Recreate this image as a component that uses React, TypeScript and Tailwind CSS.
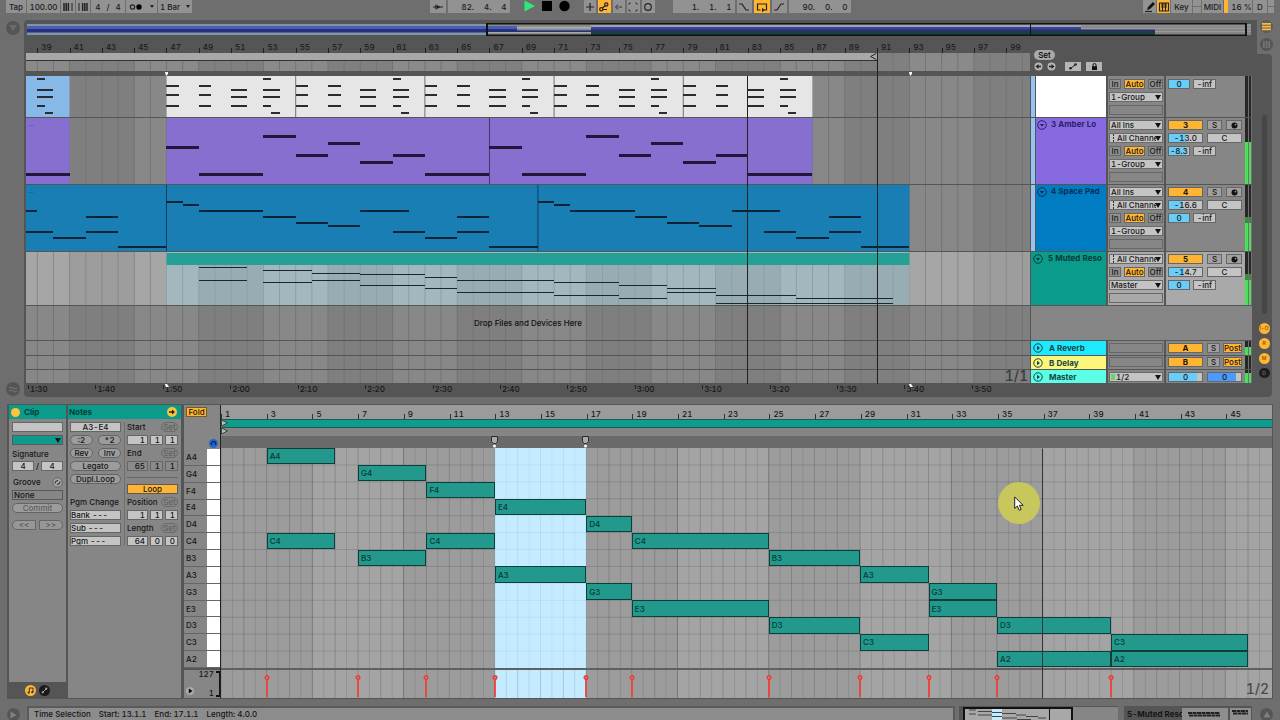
import React from "react";

/* ---------- data ---------- */

const ARR_START = 38.3;
const ARR_BARS = 62.17;
const ROLL_BARS = 46.05;

type Rect = [start: number, length: number, y: number];
type Clip = { start: number; length: number; color: string };

const DRUM_PATTERN: Rect[] = [
  [0, 0.78, 9], [0, 0.78, 18], [0, 0.78, 29],
  [2, 0.78, 9], [2, 0.78, 18], [2, 0.78, 29],
  [4, 1, 13], [4, 1, 20], [4, 1, 29],
  [6, 0.5, 2], [6, 1, 13], [6, 1, 20], [6, 0.5, 29], [6.5, 0.5, 36],
];
const AMBER_PATTERN: Rect[] = [
  [0, 2, 28], [2, 4, 55], [6, 2, 17], [8, 2, 36], [10, 2, 24], [12, 2, 43], [14, 2, 36], [16, 4, 55],
];
const SPACE_PATTERN: Rect[] = [
  [0, 1, 16], [1, 1, 19], [2, 4, 25], [6, 2, 31], [8, 2, 37], [10, 2, 40], [12, 3, 25],
  [14, 2, 46], [16, 2, 52], [18, 2, 31], [18, 2, 46], [20, 3, 61],
];

const repeat = (pattern: Rect[], starts: number[]): Rect[] =>
  starts.flatMap((s) => pattern.map(([a, l, y]): Rect => [a + s, l, y]));

const ROWS = ["A4", "G4", "F4", "E4", "D4", "C4", "B3", "A3", "G3", "E3", "D3", "C3", "A2"];
const SEMITONES: Record<string, number> = {
  A4: 0, G4: 2, F4: 4, E4: 5, D4: 7, C4: 9, B3: 10, A3: 12, G3: 14, E3: 17, D3: 19, C3: 21, A2: 24,
};
const NOTES: [name: string, start: number, end: number][] = [
  ["A4", 3, 6], ["C4", 3, 6], ["G4", 7, 10], ["B3", 7, 10], ["F4", 10, 13], ["C4", 10, 13],
  ["E4", 13, 17], ["A3", 13, 17], ["D4", 17, 19], ["G3", 17, 19], ["C4", 19, 25], ["E3", 19, 25],
  ["B3", 25, 29], ["D3", 25, 29], ["A3", 29, 32], ["C3", 29, 32], ["G3", 32, 35], ["E3", 32, 35],
  ["D3", 35, 40], ["A2", 35, 40], ["C3", 40, 46], ["A2", 40, 46],
];
const VELOCITIES = [3, 7, 10, 13, 17, 19, 25, 29, 32, 35, 40];

const arrPct = (bar: number) => `${((bar - ARR_START) / ARR_BARS) * 100}%`;
const rollPct = (bar: number) => `${((bar - 1) / ROLL_BARS) * 100}%`;
const range = (n: number) => Array.from({ length: n }, (_, i) => i);

/* ---------- small controls ---------- */

function Arrow({ className = "" }: { className?: string }) {
  return (
    <svg viewBox="0 0 6 5" className={`h-[5px] w-1.5 ${className}`} aria-hidden="true">
      <path d="M0 0h6L3 5z" fill="#111" />
    </svg>
  );
}

function Drop({ label, value, prefix, className = "" }: { label: string; value: string; prefix?: React.ReactNode; className?: string }) {
  return (
    <label className={`relative flex h-[10px] items-center border border-[#6a6a6a] bg-[#c4c4c4] ${className}`}>
      {prefix}
      <select aria-label={label} className="h-2 w-full min-w-0 appearance-none overflow-hidden bg-transparent pr-1.5 pl-px text-[8px] leading-[8px] outline-none">
        <option>{value}</option>
      </select>
      <Arrow className="pointer-events-none absolute right-px top-[2px]" />
    </label>
  );
}

function Box({ children, className = "", label }: { children?: React.ReactNode; className?: string; label?: string }) {
  return (
    <button aria-label={label} className={`flex h-[10px] items-center justify-center overflow-hidden whitespace-nowrap border border-[#666] leading-[8px] ${className}`}>
      {children}
    </button>
  );
}

function Num({ label, value, className = "" }: { label: string; value: string; className?: string }) {
  return (
    <input aria-label={label} defaultValue={value} className={`h-[10px] min-w-0 border border-[#666] p-0 text-[8px] leading-[8px] outline-none ${className}`} />
  );
}

function Pill({ children, className = "" }: { children: React.ReactNode; className?: string }) {
  return (
    <button className={`flex h-[10px] items-center justify-center rounded-full border border-[#646464] bg-[#9c9c9c] leading-[8px] ${className}`}>
      {children}
    </button>
  );
}

/* ---------- transport ---------- */

function T({ children, className = "", label, bg = "bg-[#929292]" }: { children?: React.ReactNode; className?: string; label?: string; bg?: string }) {
  return (
    <button aria-label={label} className={`flex h-[13px] shrink-0 items-center justify-center whitespace-nowrap ${bg} ${className}`}>
      {children}
    </button>
  );
}

function Ico({ children, w = 12 }: { children: React.ReactNode; w?: number }) {
  return (
    <svg width={w} height="12" viewBox={`0 0 ${w} 12`} fill="none" stroke="#222" strokeWidth="1.2" aria-hidden="true">
      {children}
    </svg>
  );
}

function Transport() {
  return (
    <header className="flex h-5 shrink-0 items-start pr-[6px] pl-[6px] text-[8px] text-[#1c1c1c]">
      <div className="flex flex-1 gap-px">
        <T className="w-5">Tap</T>
        <T className="w-[33px]">100.00</T>
        <T className="w-[14px]" label="Nudge down"><Ico w={10}><path d="M1 2v8M3.2 2v8M5.400 2v8" strokeWidth="1.500" /><path d="M9 2v8" strokeWidth="1" /></Ico></T>
        <T className="w-[14px]" label="Nudge up"><Ico w={10}><path d="M4.600 2v8M6.800 2v8M9 2v8" strokeWidth="1.500" /><path d="M1 2v8" strokeWidth="1" /></Ico></T>
        <T className="w-[34px] gap-1.5"><span>4</span><span>/</span><span>4</span></T>
        <T className="w-[31px] gap-2" label="Metronome">
          <Ico w={13}><circle cx="3.500" cy="6" r="2.200" /><circle cx="10" cy="6" r="2.700" fill="#000" stroke="none" /></Ico>
          <svg width="4" height="3" viewBox="0 0 4 3" aria-hidden="true"><path d="M0 0h4L2 3z" fill="#222" /></svg>
        </T>
        <T className="w-[34px] gap-1.5">
          1 Bar
          <svg width="4" height="3" viewBox="0 0 4 3" aria-hidden="true"><path d="M0 0h4L2 3z" fill="#222" /></svg>
        </T>
      </div>
      <div className="flex items-start">
        <div className="flex gap-0.5">
          <T className="w-4" label="Follow"><Ico w={12}><path d="M1 6h10M4 3.500v5" /><path d="M5 4L8.500 6 5 8z" fill="#222" stroke="none" /></Ico></T>
          <T className="w-[62px] justify-end gap-2.5 pr-[3px]"><span>82.</span><span>4.</span><span>4</span></T>
        </div>
        <div className="mx-[14px] flex gap-[7px]">
          <button aria-label="Play"><Ico w={11}><path d="M0.500 0.500L11 6 0.500 11.500z" fill="#2fe87a" stroke="none" /></Ico></button>
          <button aria-label="Stop"><Ico w={10}><path d="M0 1h10v10H0z" fill="#000" stroke="none" /></Ico></button>
          <button aria-label="Record"><Ico w={11}><circle cx="5.500" cy="6" r="5.200" fill="#000" stroke="none" /></Ico></button>
        </div>
        <div className="flex gap-[2px]">
          <T className="w-3" label="Overdub"><Ico><path d="M6 2v8M2 6h8" /></Ico></T>
          <T className="w-[13px]" label="Automation arm" bg="bg-[#ffb532]"><Ico><circle cx="3.300" cy="8.300" r="1.600" /><circle cx="8.300" cy="3.500" r="1.600" /><path d="M4.500 7L7.200 4.700M5 8.500h4" /></Ico></T>
          <T className="w-[12px]" label="Re-enable automation"><Ico><path d="M2 6h7M5 3.500L2.500 6 5 8.500M8 5v2" stroke="#555" /></Ico></T>
          <T className="w-[13px]" label="Capture"><Ico><path d="M2 4V2h2M8 2h2v2M10 8v2H8M4 10H2V8" stroke="#444" strokeWidth="1" /></Ico></T>
          <T className="w-[13px]" label="Session record"><Ico><circle cx="6" cy="6" r="3.300" /></Ico></T>
        </div>
        <div className="ml-[18px] flex gap-[2px]">
          <T className="w-[62px] justify-end gap-2.5 pr-[3px]"><span>1.</span><span>1.</span><span>1</span></T>
          <T className="w-[15px]" label="Punch in"><Ico><path d="M1 3h3l4 6h3" /></Ico></T>
          <T className="w-[16px]" label="Loop" bg="bg-[#ffb532]"><Ico><path d="M4.500 9H1.500V3h9v6H7" /><path d="M6 6.800v4.400L8.500 9z" fill="#222" stroke="none" /></Ico></T>
          <T className="w-[15px]" label="Punch out"><Ico><path d="M1 9h3l4-6h3" /></Ico></T>
          <T className="w-[62px] justify-end gap-2.5 pr-[3px]"><span>90.</span><span>0.</span><span>0</span></T>
        </div>
      </div>
      <div className="flex flex-1 justify-end gap-px">
        <T className="w-[13px]" label="Draw mode"><Ico><path d="M3 9l1-3 5-5 2 2-5 5z" fill="#111" stroke="none" /><path d="M1 10.500h7" /></Ico></T>
        <T className="w-[13px]" label="Computer keyboard" bg="bg-[#ffb532]"><Ico><path d="M1.500 2h9v8h-9zM4.500 7v3M7.500 7v3" /><path d="M3.500 2h2v5h-2zM6.500 2h2v5h-2z" fill="#222" stroke="none" /></Ico></T>
        <T className="w-[21px]">Key</T>
        <span className="flex w-[8px] flex-col gap-px"><i className="h-1.5 bg-[#929292]" /><i className="h-1.5 bg-[#929292]" /></span>
        <T className="w-[21px]">MIDI</T>
        <T className="w-[28px] gap-[3px]"><i className="h-[13px] w-1 bg-[#ffb532]" />16 %</T>
        <T className="w-[14px]">D</T>
        <span className="flex w-[6px] flex-col gap-px"><i className="h-1.5 bg-[#929292]" /><i className="h-1.5 bg-[#929292]" /></span>
      </div>
    </header>
  );
}

/* ---------- arrangement ---------- */

function LaneGrid({ light, dark, line }: { light: string; dark: string; line: string }) {
  return (
    <>
      {range(16).map((i) => (
        <rect key={i} x={37 + i * 4} y="0" width="4" height="100%" fill={i % 2 === 0 ? light : dark} />
      ))}
      {range(63).map((i) => (
        <path key={i} d={`M${38 + i} 0v100`} stroke={line} strokeWidth="1" vectorEffect="non-scaling-stroke" />
      ))}
    </>
  );
}

function Lane({ height, selected, clips = [], notes = [], noteH = 2, noteColor = "#161c2c", dividers = [], children }: {
  height: number; selected?: boolean; clips?: Clip[]; notes?: Rect[]; noteH?: number; noteColor?: string; dividers?: number[]; children?: React.ReactNode;
}) {
  return (
    <svg className="block h-full w-full" viewBox={`${ARR_START} 0 ${ARR_BARS} ${height}`} preserveAspectRatio="none" aria-hidden="true">
      {selected
        ? <LaneGrid light="#a6a6a6" dark="#9d9d9d" line="#888" />
        : <LaneGrid light="#888888" dark="#7f7f7f" line="#747474" />}
      {clips.map((c) => <rect key={c.start} x={c.start} y="0" width={c.length} height={height} fill={c.color} />)}
      {dividers.map((d) => <path key={d} d={`M${d} 0v${height}`} stroke="#000" strokeOpacity="0.5" strokeWidth="1" vectorEffect="non-scaling-stroke" />)}
      {children}
      {notes.map(([s, l, y], i) => (
        <rect key={i} x={s} y={y} width={l} height={noteH} fill={noteColor} shapeRendering="crispEdges" />
      ))}
    </svg>
  );
}

function Meter({ level, hot }: { level: number; hot?: boolean }) {
  return (
    <div className="flex w-[7px] shrink-0 gap-px bg-[#707070] pr-px">
      {[0, 1].map((i) => (
        <div key={i} className="flex flex-1 flex-col justify-end bg-[#262626]">
          {hot && <i className="h-1.5 bg-[#3c8a3c]" />}
          <i className="bg-[#4be05a]" style={{ height: `${level}%` }} />
        </div>
      ))}
    </div>
  );
}

function InAutoOff() {
  return (
    <div className="flex justify-between">
      <Box className="w-3 bg-[#8f8f8f]">In</Box>
      <Box className="w-[21px] bg-[#ffb532]">Auto</Box>
      <Box className="w-[15px] bg-[#8f8f8f]">Off</Box>
    </div>
  );
}

function Empty() {
  return <div className="h-[10px] border border-[#666]" />;
}

const dots = (
  <svg width="4" height="8" viewBox="0 0 4 8" className="ml-0.5 shrink-0" aria-hidden="true">
    <path d="M1.500 0v8" stroke="#333" strokeDasharray="2 1" />
  </svg>
);

type TrackProps = {
  name?: string; block: string; text: string; group?: boolean; num?: string; vol?: string; volFill?: string; send: string; sendFill?: string;
  out: string; ins?: boolean; chan?: boolean; level: number; hot?: boolean; selected?: boolean; top: string;
};

function TrackHead(p: TrackProps) {
  const bg = p.selected ? "bg-[#a9a9a9]" : "bg-[#868686]";
  return (
    <div className="flex w-[222px] shrink-0 overflow-hidden pl-px text-[8px] text-[#161616]">
      {p.group && <div className="w-1 shrink-0 bg-[#93c4f2]" />}
      <div className={`flex gap-[4px] pt-[2px] ${p.group ? "ml-px w-[70px] pl-px" : "w-[75px] gap-[5px] pl-0.5"} ${p.block} ${p.text}`}>
        {p.name && (
          <>
            <button aria-label={`Fold ${p.name}`} className="h-[10px] w-[10px] shrink-0">
              <svg viewBox="0 0 10 10" width="10" height="10" fill="none" aria-hidden="true">
                <circle cx="5" cy="5" r="4.300" stroke="currentColor" /><path d="M2.800 4h4.400L5 6.800z" fill="currentColor" />
              </svg>
            </button>
            <h3 className="h-[10px] overflow-hidden whitespace-nowrap font-bold leading-[9px]">{p.name}</h3>
          </>
        )}
      </div>
      <div className={`ml-0.5 flex w-[56px] shrink-0 flex-col gap-[3px] px-px ${p.top} ${bg}`}>
        {p.ins && <Drop label="Input" value="All Ins" />}
        {p.chan && <Drop label="Channel" value="All Channels" prefix={dots} />}
        <InAutoOff />
        <Drop label="Output" value={p.out} />
        <Empty />
      </div>
      <div className={`ml-0.5 flex flex-1 flex-col gap-[3px] pl-[2px] ${p.top} ${bg}`}>
        {p.num && (
          <>
            <div className="flex gap-1">
              <Box className="w-[35px] bg-[#ffb532] font-bold">{p.num}</Box>
              <Box className="w-[15px] bg-[#a0a0a0]">S</Box>
              <Box className="w-4 bg-[#a0a0a0]" label="Arm">
                <svg width="7" height="7" viewBox="0 0 7 7" aria-hidden="true"><circle cx="3.500" cy="3.500" r="3" fill="#111" /><circle cx="4.500" cy="2.600" r="0.900" fill="#999" /></svg>
              </Box>
            </div>
            <div className="flex gap-1">
              <Num label="Volume" value={p.vol ?? ""} className={`w-[35px] text-center ${p.volFill}`} />
              <Box className="w-[35px] bg-[#c4c4c4]">C</Box>
            </div>
          </>
        )}
        <div className="flex gap-[3px]">
          <Num label="Send" value={p.send} className={`w-[22px] text-center ${p.sendFill ?? "bg-[#68cdf8]"}`} />
          <Box className="w-[23px] bg-[#c4c4c4]">-inf</Box>
        </div>
      </div>
      <Meter level={p.level} hot={p.hot} />
    </div>
  );
}

function ReturnHead({ name, color, children, meter }: { name: string; color: string; children: React.ReactNode; meter: number }) {
  return (
    <div className="flex w-[222px] shrink-0 overflow-hidden pl-px text-[8px] text-[#161616]">
      <div className={`flex w-[75px] shrink-0 items-center gap-[6px] pl-0.5 text-[#124646] ${color}`}>
        <svg viewBox="0 0 10 10" width="10" height="10" fill="none" className="shrink-0" aria-hidden="true">
          <circle cx="5" cy="5" r="4.200" stroke="currentColor" /><path d="M4 2.800v4.400L7 5z" fill="currentColor" />
        </svg>
        <h3 className="font-bold leading-[8px]">{name}</h3>
      </div>
      {children}
      <Meter level={meter} />
    </div>
  );
}

function TrackRow({ height, lane, head }: { height: string; lane: React.ReactNode; head: React.ReactNode }) {
  return (
    <div className={`flex ${height} border-b border-[#555]`}>
      <div className="relative min-w-0 flex-1">{lane}</div>
      {head}
    </div>
  );
}

function Overview() {
  return (
    <div className="h-[13px] shrink-0 px-px">
      <svg className="block h-full w-full" viewBox="0 0 1224 13" preserveAspectRatio="none" aria-hidden="true">
        <rect y="1" width="1224" height="11" fill="#8a8a8a" />
        <rect y="1" width="460" height="11" fill="#8096a8" />
        <rect y="3" width="490" height="4" fill="#4a5fae" />
        <rect y="6" width="490" height="3.500" fill="#26307e" />
        <path d="M0 7.500h1220" stroke="#26307e" strokeWidth="0.600" />
        <rect x="490" y="4" width="76" height="1.500" fill="#a8b0b6" />
        <path d="M460 8.500h104" stroke="#22307a" />
        <path d="M460 9.500h104" stroke="#a0aab2" />
        <rect x="564" y="2" width="490" height="2" fill="#a3a3ad" />
        <rect x="564" y="4" width="490" height="4" fill="#39459a" />
        <rect x="564" y="6.500" width="564" height="3" fill="#232d66" opacity="0.900" />
        <rect x="564" y="8.500" width="564" height="3.500" fill="#183f42" />
        <rect x="1128" y="5" width="96" height="7" fill="#858585" />
        <path d="M1054 2h170M1054 5.500h170M1128 8.500h96" stroke="#9a9a9a" strokeWidth="1" />
        <rect x="460" y="0.500" width="759" height="12" fill="none" stroke="#111" strokeWidth="2" />
        <path d="M1003.500 0v13" stroke="#111" />
      </svg>
    </div>
  );
}

function Arrangement() {
  return (
    <section aria-label="Arrangement" className="flex shrink-0">
      <div className="flex w-6 shrink-0 flex-col items-center justify-between pt-[1px] pb-[1px] pl-[2px]">
        <button aria-label="Hide overview" className="flex h-[14px] w-[14px] items-center justify-center rounded-full bg-[#555]">
          <svg width="8" height="8" viewBox="0 0 8 8" aria-hidden="true"><path d="M0 1h8L4 7.500z" fill="#6a6a6a" /></svg>
        </button>
        <button aria-label="Warp" className="flex h-[14px] w-[14px] items-center justify-center rounded-full bg-[#555]">
          <svg width="10" height="8" viewBox="0 0 10 8" fill="none" stroke="#777" aria-hidden="true"><path d="M1 3q2-2 4 0t4 0M1 6q2-2 4 0t4 0" /></svg>
        </button>
      </div>

      <div className="flex min-w-0 flex-1 flex-col rounded-l bg-[#555] pt-[3px] pr-[5px] pl-0.5">
        <Overview />
        <div className="relative">
          <div className="flex">
            <div className="min-w-0 flex-1">
              <div className="flex h-[17px] items-end overflow-hidden text-[8px] text-[#1a1a1a]">
                <div className="min-w-0 basis-0" style={{ flexGrow: 0.7 }} />
                {range(31).map((i) => (
                  <div key={i} className="flex h-[11px] min-w-0 basis-0 items-stretch gap-[3px]" style={{ flexGrow: i === 30 ? 1.47 : 2 }}>
                    <i className="mt-[6px] w-px shrink-0 bg-[#1f1f1f]" />
                    <span className="leading-[10px]">{39 + i * 2}</span>
                  </div>
                ))}
              </div>
              <div className="h-[18px]">
                <svg className="block h-full w-full" viewBox={`${ARR_START} 0 ${ARR_BARS} 18`} preserveAspectRatio="none" aria-hidden="true">
                  <LaneGrid light="#8a8a8a" dark="#808080" line="#747474" />
                  <rect x="38" y="0" width="53" height="7" fill="#a8a8a8" />
                  <path d="M38 7.500h53" stroke="#333" vectorEffect="non-scaling-stroke" />
                  <path d="M90.950 0.500L90.600 3.500L90.950 6.500" fill="none" stroke="#222" vectorEffect="non-scaling-stroke" />
                </svg>
              </div>
            </div>
            <div className="w-[222px] shrink-0 pt-[14px] pl-1">
              <button className="flex h-[10px] w-[21px] items-center justify-center rounded-full bg-[#a9a9a9] text-[8px] leading-[8px]">Set</button>
              <div className="mt-0.5 flex items-center">
                <button aria-label="Previous locator"><svg width="9" height="9" viewBox="0 0 9 9" aria-hidden="true"><circle cx="4.500" cy="4.500" r="4" fill="#b5b5b5" /><path d="M1.500 4.500L4.500 2v1.700H7v1.600H4.500V7z" fill="#222" /></svg></button>
                <button aria-label="Next locator" className="ml-1"><svg width="9" height="9" viewBox="0 0 9 9" aria-hidden="true"><circle cx="4.500" cy="4.500" r="4" fill="#b5b5b5" /><path d="M7.500 4.500L4.500 2v1.700H2v1.600h2.500V7z" fill="#222" /></svg></button>
                <button aria-label="Automation mode" className="ml-[9px] flex h-[9px] w-4 items-center justify-center bg-[#b5b5b5]"><svg width="8" height="7" viewBox="0 0 8 7" aria-hidden="true"><path d="M1.500 5.500l5-4" stroke="#222" /><circle cx="1.500" cy="5.300" r="1.300" fill="#222" /><circle cx="6.500" cy="1.500" r="1.300" fill="#222" /></svg></button>
                <button aria-label="Lock envelopes" className="ml-[5px] flex h-[9px] w-4 items-center justify-center bg-[#b5b5b5]"><svg width="7" height="7" viewBox="0 0 7 7" aria-hidden="true"><path d="M1 3.200h5V7H1z" fill="#111" /><path d="M2 3.500V2a1.500 1.500 0 013 0v1.500" fill="none" stroke="#111" /></svg></button>
              </div>
            </div>
          </div>

          <div className="h-[5px]" />

          <TrackRow
            height="h-[42px]"
            lane={
              <Lane height={41} notes={repeat(DRUM_PATTERN, [33, 47, 55, 63, 71, 79]).filter((n) => n[0] >= 38)} dividers={[55, 63, 71, 79]} noteColor="#2a2c30"
                clips={[{ start: 33, length: 8, color: "#86b8e8" }, { start: 47, length: 40, color: "#e6e6e6" }]} />
            }
            head={<TrackHead group block="bg-white" text="text-black" out="1-Group" send="0" level={0} top="pt-[3px]" />}
          />
          <TrackRow
            height="h-[67px]"
            lane={
              <Lane height={66} notes={repeat(AMBER_PATTERN, [21, 47, 67])} noteH={3} dividers={[67]} noteColor="#21163c"
                clips={[{ start: 21, length: 20, color: "#876fd0" }, { start: 47, length: 40, color: "#876fd0" }]} />
            }
            head={<TrackHead group name="3 Amber Lo" block="bg-[#876ae0]" text="text-[#2c1f66]" num="3" ins chan vol="-13.0" volFill="bg-linear-to-r from-[#68cdf8] from-50% to-[#c4c4c4] to-50%" send="-8.3" sendFill="bg-linear-to-r from-[#68cdf8] from-85% to-[#c4c4c4] to-85%" out="1-Group" level={63} top="pt-0.5" />}
          />
          <TrackRow
            height="h-[67px]"
            lane={
              <Lane height={66} notes={repeat(SPACE_PATTERN, [24, 47, 70])} dividers={[47, 70]} noteColor="#0b2438"
                clips={[{ start: 24, length: 23, color: "#187eb4" }, { start: 47, length: 46, color: "#187eb4" }]} />
            }
            head={<TrackHead group name="4 Space Pad" block="bg-[#007dc2]" text="text-[#052f58]" num="4" ins chan vol="-16.6" volFill="bg-linear-to-r from-[#68cdf8] from-40% to-[#c4c4c4] to-40%" send="0" out="1-Group" level={42} hot top="pt-0.5" />}
          />
          <TrackRow
            height="h-[54px]"
            lane={
              <Lane height={53} selected noteH={1} noteColor="#14282e" notes={NOTES.map(([n, s, e]): Rect => [s + 46, e - s, Math.round(14.5 + SEMITONES[n] * 1.5)])}>
                <rect x="47" y="0" width="46" height="53" fill="#a3b8be" />
                {range(6).map((i) => <rect key={i} x={49 + i * 8} y="13" width="4" height="40" fill="#98adb3" />)}
                {range(46).map((i) => <path key={i} d={`M${47 + i} 13v40`} stroke="#8ca0a6" vectorEffect="non-scaling-stroke" />)}
                <rect x="47" y="1" width="46" height="12" fill="#24a096" />
              </Lane>
            }
            head={<TrackHead selected name="5 Muted Reso" block="bg-[#0b9b8b]" text="text-[#043c38]" num="5" chan vol="-14.7" volFill="bg-linear-to-r from-[#68cdf8] from-45% to-[#c4c4c4] to-45%" send="0" out="Master" level={47} hot top="pt-0.5" />}
          />
          <TrackRow
            height="h-[35px]"
            lane={
              <>
                <Lane height={34} />
                <p className="absolute inset-0 flex items-center justify-center text-[8px] text-[#111]">Drop Files and Devices Here</p>
              </>
            }
            head={<div className="ml-px w-[221px] bg-[#868686]" />}
          />
          <TrackRow
            height="h-[15px]"
            lane={<Lane height={14} />}
            head={
              <ReturnHead name="A Reverb" color="bg-[#1eeaff]" meter={60}>
                <div className="ml-0.5 w-[56px] bg-[#868686] px-px pt-[2px]"><Empty /></div>
                <div className="ml-0.5 flex flex-1 bg-[#868686] pt-[2px] pl-[2px]">
                  <Box className="w-[35px] bg-[#ffb532] font-bold">A</Box>
                  <Box className="ml-1 w-[13px] bg-[#a0a0a0]">S</Box>
                  <Box className="ml-[3px] w-[19px] bg-[#ffb532]">Post</Box>
                </div>
              </ReturnHead>
            }
          />
          <TrackRow
            height="h-[14px]"
            lane={<Lane height={13} />}
            head={
              <ReturnHead name="B Delay" color="bg-[#fcf67c]" meter={0}>
                <div className="ml-0.5 w-[56px] bg-[#868686] px-px pt-px"><Empty /></div>
                <div className="ml-0.5 flex flex-1 bg-[#868686] pt-px pl-[2px]">
                  <Box className="w-[35px] bg-[#ffb532] font-bold">B</Box>
                  <Box className="ml-1 w-[13px] bg-[#a0a0a0]">S</Box>
                  <Box className="ml-[3px] w-[19px] bg-[#ffb532]">Post</Box>
                </div>
              </ReturnHead>
            }
          />
          <TrackRow
            height="h-[14px]"
            lane={
              <>
                <Lane height={13} />
                <span className="absolute right-0.5 bottom-0 text-[14px] leading-[14px] text-[#3c3c3c]">1/1</span>
              </>
            }
            head={
              <ReturnHead name="Master" color="bg-[#5cffe6]" meter={75}>
                <div className="ml-0.5 w-[56px] bg-[#868686] px-px pt-[2px]">
                  <Drop label="Master output" value="1/2" prefix={<i className="ml-px h-1.5 w-1 shrink-0 bg-[#62d870]" />} />
                </div>
                <div className="ml-0.5 flex flex-1 gap-1 bg-[#868686] pt-[2px] pl-[2px]">
                  <Num label="Master volume" value="0" className="w-[35px] bg-linear-to-r from-[#68cdf8] from-85% to-[#c4c4c4] to-85% text-center" />
                  <Num label="Cue volume" value="0" className="w-[35px] bg-linear-to-r from-[#4a9aff] from-85% to-[#c4c4c4] to-85% text-center" />
                </div>
              </ReturnHead>
            }
          />

          {/* playheads and loop handles over the lanes */}
          <div className="pointer-events-none absolute inset-y-0 left-0 right-[222px]">
            <i className="absolute top-10 bottom-0 w-px bg-[#222]" style={{ left: arrPct(82.95) }} />
            <i className="absolute top-[17px] bottom-0 w-px bg-[#222]" style={{ left: arrPct(90.97) }} />
            {[46.9, 92.95].map((b) => (
              <React.Fragment key={b}>
                <svg width="4" height="4" viewBox="0 0 4 4" className="absolute top-9" style={{ left: arrPct(b) }} aria-hidden="true"><path d="M0 0h3v2L1 4z" fill="#fff" /></svg>
                <svg width="4" height="4" viewBox="0 0 4 4" className="absolute -bottom-1" style={{ left: arrPct(b) }} aria-hidden="true"><path d="M0 0h2l2 3H1z" fill="#fff" /></svg>
              </React.Fragment>
            ))}
            <span className="absolute top-[85px] left-[3px] text-[6px] leading-[6px] text-[#3b2d70]">...</span>
            <span className="absolute top-[152px] left-[3px] text-[6px] leading-[6px] text-[#0b3b60]">...</span>
          </div>
        </div>

        <div className="mr-[222px] flex h-[13px] overflow-hidden text-[8px] text-[#161616]">
          <div className="min-w-0 basis-0" style={{ flexGrow: 2 }} />
          {["1:30", "1:40", "1:50", "2:00", "2:10", "2:20", "2:30", "2:40", "2:50", "3:00", "3:10", "3:20", "3:30", "3:40", "3:50"].map((t, i) => (
            <div key={t} className="flex min-w-0 basis-0 gap-px pt-px" style={{ flexGrow: i === 14 ? 58 : 67.4 }}>
              <i className="h-1 w-px shrink-0 bg-[#222]" />
              <span className="leading-[9px]">{t}</span>
            </div>
          ))}
        </div>
      </div>

      <div className="flex w-[23px] shrink-0 flex-col">
        <div className="flex flex-col items-center gap-[5px] pr-1 pb-[3px]">
          <button aria-label="Arrangement view" className="flex h-[13px] w-[13px] items-center justify-center rounded-full bg-[#5c5c5c]">
            <svg width="9" height="9" viewBox="0 0 9 9" aria-hidden="true"><path d="M0 1h9v1.800H0zM0 3.700h9v1.800H0zM0 6.400h9v1.800H0z" fill="#ffbc3c" /></svg>
          </button>
          <button aria-label="Session view" className="flex h-[13px] w-[13px] items-center justify-center rounded-full bg-[#555]">
            <svg width="9" height="9" viewBox="0 0 9 9" aria-hidden="true"><path d="M1 1h1.800v7H1zM3.700 1h1.800v7H3.700zM6.400 1h1.800v7H6.400z" fill="#747474" /></svg>
          </button>
        </div>
        <div className="flex w-[15px] flex-1 flex-col items-center rounded-r bg-[#555] pt-[61px] pr-px pb-[19px]">
          <div className="w-[5px] flex-1 rounded-full bg-[#464646]" />
          <div className="mt-[9px] flex flex-col gap-[4px] text-[5px] text-[#7a4a00]">
            {["I-O", "R", "M"].map((l) => (
              <button key={l} className="flex h-[11px] w-[11px] items-center justify-center rounded-full bg-[#ffb532] leading-none">{l}</button>
            ))}
            <button aria-label="Delay" className="flex h-[10px] w-[11px] items-center justify-center rounded-full bg-[#1e1e1e] leading-none text-[#777]">D</button>
          </div>
        </div>
      </div>
    </section>
  );
}

/* ---------- clip view ---------- */

function SetRow({ label }: { label: string }) {
  return (
    <div className="flex h-[10px] items-center justify-between leading-[10px]">
      {label}
      <button className="flex h-[10px] w-[17px] items-center justify-center rounded-full border border-[#6a6a6a] leading-[8px] text-[#626262]">Set</button>
    </div>
  );
}

function Triple({ label, v, dim }: { label: string; v: [string, string, string]; dim?: boolean }) {
  const c = dim ? "bg-[#8b8b8b]" : "bg-[#c4c4c4]";
  return (
    <div className="flex gap-0.5">
      <Num label={`${label} bars`} value={v[0]} className={`w-5 flex-1 pr-0.5 text-right ${c}`} />
      <Num label={`${label} beats`} value={v[1]} className={`w-[13px] pr-0.5 text-right ${c}`} />
      <Num label={`${label} sixteenths`} value={v[2]} className={`w-[13px] pr-0.5 text-right ${c}`} />
    </div>
  );
}

function ClipPanel() {
  return (
    <div className="flex w-[57px] shrink-0 flex-col">
      <h2 className="flex h-[14px] items-center gap-1 bg-[#0b9b8b] pl-[2px] font-bold text-[#053f3a]">
        <i className="h-[9px] w-[9px] rounded-full bg-[#ffc23c]" />Clip
      </h2>
      <div className="flex flex-1 flex-col gap-[3px] bg-[#868686] px-[3px] pt-[3px]">
        <Num label="Clip name" value="" className="w-full bg-[#c4c4c4]" />
        <div className="relative h-[10px] border border-[#5a5a5a] bg-[#0f9a8d]"><Arrow className="absolute right-px top-[2px]" /></div>
        <span className="h-[10px] leading-[12px]">Signature</span>
        <div className="flex items-center justify-between leading-[8px]">
          <Num label="Numerator" value="4" className="w-[22px] bg-[#c4c4c4] text-center" />/
          <Num label="Denominator" value="4" className="w-[22px] bg-[#c4c4c4] text-center" />
        </div>
        <div className="mt-[3px] flex h-[10px] items-center justify-between pl-px">
          Groove
          <svg width="11" height="11" viewBox="0 0 11 11" fill="none" aria-hidden="true"><circle cx="5.500" cy="5.500" r="4.700" fill="#a5a5a5" stroke="#666" /><path d="M3 6.500q0-3 3-3M8 4.500q0 3-3 3" stroke="#222" /></svg>
        </div>
        <button className="h-[10px] border border-[#5a5a5a] pl-px text-left leading-[8px]">None</button>
        <Pill className="text-[#5c5c5c]">Commit</Pill>
        <div className="mt-1 flex justify-between text-[#5a5a5a]">
          <Box className="w-6 rounded-l-full bg-[#979797]">&lt;&lt;</Box>
          <Box className="w-6 rounded-r-full bg-[#979797]">&gt;&gt;</Box>
        </div>
      </div>
      <div className="flex h-4 items-center justify-center gap-[3px]">
        <button aria-label="Notes" className="flex h-[11px] w-[11px] items-center justify-center rounded-full bg-[#ffb532]">
          <svg width="7" height="7" viewBox="0 0 7 7" aria-hidden="true"><path d="M2.300 5.500V1h3.700v4" stroke="#333" fill="none" /><circle cx="1.600" cy="5.600" r="1.100" fill="#333" /><circle cx="5.300" cy="5.200" r="1.100" fill="#333" /></svg>
        </button>
        <button aria-label="Envelopes" className="flex h-[11px] w-[11px] items-center justify-center rounded-full bg-[#1a1a1a]">
          <svg width="7" height="7" viewBox="0 0 7 7" aria-hidden="true"><path d="M1.500 5.500l4-4" stroke="#aaa" /><circle cx="1.700" cy="5.300" r="1.100" fill="#aaa" /><circle cx="5.300" cy="1.700" r="1.100" fill="#aaa" /></svg>
        </button>
      </div>
    </div>
  );
}

function NotesPanel() {
  return (
    <div className="ml-0.5 flex w-[113px] shrink-0 flex-col bg-[#868686]">
      <h2 className="flex h-[14px] shrink-0 items-center justify-between bg-[#0b9b8b] pr-1 pl-px font-bold text-[#053f3a]">
        Notes
        <svg width="10" height="10" viewBox="0 0 10 10" aria-hidden="true"><circle cx="5" cy="5" r="5" fill="#ffc23c" /><path d="M2 4.300h3V2.500L8 5 5 7.500V5.700H2z" fill="#222" /></svg>
      </h2>
      <div className="flex pt-[3px]">
        <div className="flex w-[54px] flex-col gap-[3px] pr-px pl-0.5">
          <Box className="bg-[#c4c4c4]">A3-E4</Box>
          <div className="flex justify-between"><Pill className="w-[23px]">:2</Pill><Pill className="w-[23px]">*2</Pill></div>
          <div className="flex justify-between"><Pill className="w-[23px]">Rev</Pill><Pill className="w-[23px]">Inv</Pill></div>
          <Pill>Legato</Pill>
          <Pill>Dupl.Loop</Pill>
          <span className="mt-[10px] h-[10px] whitespace-nowrap leading-[10px]">Pgm Change</span>
          {["Bank ---", "Sub ---", "Pgm ---"].map((v) => <Num key={v} label={v.slice(0, 4)} value={v} className="w-full bg-[#c4c4c4]" />)}
        </div>
        <div className="ml-0.5 flex flex-1 flex-col gap-[3px] border-l border-[#707070] pr-[3px] pl-[2px]">
          <SetRow label="Start" />
          <Triple label="Start" v={["1", "1", "1"]} />
          <SetRow label="End" />
          <Triple label="End" v={["65", "1", "1"]} dim />
          <div className="my-[3px] h-px bg-[#666]" />
          <button className="h-[10px] border border-[#5a5a5a] bg-[#ffb532] leading-[8px]">Loop</button>
          <SetRow label="Position" />
          <Triple label="Position" v={["1", "1", "1"]} />
          <SetRow label="Length" />
          <Triple label="Length" v={["64", "0", "0"]} />
        </div>
      </div>
    </div>
  );
}

function RollGrid({ rows }: { rows?: boolean }) {
  return (
    <svg className="block h-full w-full" viewBox={`1 0 ${ROLL_BARS} 13`} preserveAspectRatio="none" aria-hidden="true">
      {range(12).map((i) => <rect key={i} x={1 + i * 4} width="4" height="13" fill={i % 2 ? "#a4a4a4" : "#9c9c9c"} />)}
      <rect x="13" width="4" height="13" fill="#c4ebff" />
      {range(92).map((i) => <path key={i} d={`M${1 + i / 2} 0v13`} stroke="#000" strokeOpacity={i % 2 ? 0.1 : 0.16} vectorEffect="non-scaling-stroke" />)}
      {rows && range(12).map((i) => <path key={i} d={`M1 ${i + 1}h47`} stroke="#000" strokeOpacity="0.13" vectorEffect="non-scaling-stroke" />)}
      {rows && <rect x="13" width="4" height="13" fill="#c4ebff" fillOpacity="0.6" />}
    </svg>
  );
}

function Editor() {
  return (
    <div className="ml-[3px] flex min-w-0 flex-1">
      <div className="flex w-9 shrink-0 flex-col bg-[#868686] text-[8px] text-[#161616]">
        <div className="flex h-11 shrink-0 flex-col justify-between pl-[2px]">
          <button className="mt-0.5 h-[10px] w-[21px] border border-[#7a5a20] bg-[#ffb532] leading-[8px]">Fold</button>
          <svg width="9" height="9" viewBox="0 0 9 9" className="mb-px ml-[23px]" aria-hidden="true"><circle cx="4.500" cy="4.500" r="4.500" fill="#2467c4" /><path d="M2.500 6V4.500a2 2 0 014 0V6" stroke="#082a66" strokeWidth="1.300" fill="none" /></svg>
        </div>
        <div className="flex flex-1 flex-col">
          {ROWS.map((r) => (
            <div key={r} className="flex flex-1 border-b border-[#666]">
              <span className="flex flex-1 items-center pl-0.5">{r}</span>
              <i className="w-[13px] bg-white" />
            </div>
          ))}
        </div>
        <div className="flex h-[30px] shrink-0 justify-between border-t-2 border-[#555] pl-0.5">
          <svg width="8" height="8" viewBox="0 0 8 8" className="mt-[17px]" aria-hidden="true"><circle cx="4" cy="4" r="4" fill="#aaa" /><path d="M2.800 1.500v5L6.500 4z" fill="#000" /></svg>
          <div className="flex gap-[2px]">
            <div className="flex flex-col justify-between text-right leading-[9px]"><span>127</span><span>1</span></div>
            <i className="my-px w-1 border-y-2 border-r border-[#111]" />
          </div>
        </div>
      </div>

      <div className="relative flex min-w-0 flex-1 flex-col border-l border-[#222]">
        <div className="flex h-[14px] shrink-0 items-end overflow-hidden bg-[#9b9b9b] text-[8px] text-[#161616]">
          {range(23).map((i) => (
            <div key={i} className="flex h-full min-w-0 flex-1 items-end gap-[3px]">
              <i className="h-[5px] w-px shrink-0 bg-[#333]" />
              <span className="leading-[9px]">{1 + i * 2}</span>
            </div>
          ))}
        </div>
        <div className="h-[9px] shrink-0 border-y border-[#1c5b55] bg-[#0f9c8d]" />
        <div className="h-2 shrink-0 bg-[#858585]" />
        <div className="h-[12px] shrink-0 bg-[#6a6a6a]" />
        <div className="relative min-h-0 flex-1">
          <div className="absolute inset-0"><RollGrid rows /></div>
          {NOTES.map(([n, s, e], i) => (
            <button key={i} className="absolute flex items-center border border-[#0d3f3a] bg-[#22998c] pl-0.5 text-[8px] leading-none text-[#053a35]"
              style={{ left: rollPct(s), width: `${((e - s) / ROLL_BARS) * 100}%`, top: `${(ROWS.indexOf(n) / 13) * 100}%`, height: `${97 / 13}%` }}>
              {n}
            </button>
          ))}
        </div>
        <div className="relative h-[30px] shrink-0 border-t-2 border-[#606060]">
          <RollGrid />
          {VELOCITIES.map((v) => (
            <svg key={v} width="6" height="22" viewBox="0 0 6 22" className="absolute bottom-px -ml-[3px]" style={{ left: rollPct(v) }} aria-hidden="true">
              <path d="M3 4v18" stroke="#ef4136" strokeWidth="1.800" /><circle cx="3" cy="2.600" r="1.800" fill="#b88" stroke="#ef3a30" strokeWidth="1.400" />
            </svg>
          ))}
          <span className="absolute right-[3px] bottom-0.5 text-[14px] leading-[14px] text-[#4a4a4a]">1/2</span>
        </div>

        {/* markers, playhead and pointer over the grid */}
        <div className="pointer-events-none absolute inset-0">
          <svg width="8" height="16" viewBox="0 0 8 16" className="absolute top-[14px] left-0" aria-hidden="true">
            <path d="M0.500 1l6 3-6 3zM0.500 9l6 3-6 3z" fill="#bbb" stroke="#444" />
          </svg>
          {[13, 17].map((b) => (
            <svg key={b} width="7" height="12" viewBox="0 0 7 12" className="absolute top-[31px] -ml-[4px]" style={{ left: rollPct(b) }} aria-hidden="true">
              <path d="M0.500 0.500h6v5l-2 2h-2l-2-2z" fill="#aaa" stroke="#2a2a2a" /><circle cx="3.500" cy="10" r="1.500" fill="#fff" />
            </svg>
          ))}
          <i className="absolute top-11 bottom-0 w-px bg-[#333]" style={{ left: rollPct(36.97) }} />
          <div className="absolute top-[77px] -ml-5 h-[42px] w-[42px] rounded-full bg-[#cccc58]/90" style={{ left: rollPct(35.92) }}>
            <svg width="10" height="16" viewBox="0 0 10 16" className="absolute top-[14px] left-4" aria-hidden="true">
              <path d="M0.700 1v11.500l2.700-2.500 1.800 4.300 2-0.900-1.800-4.100h3.800z" fill="#fff" stroke="#222" />
            </svg>
          </div>
        </div>
      </div>
    </div>
  );
}

/* ---------- status bar ---------- */

function StatusBar() {
  return (
    <footer className="mt-[7px] flex h-[14px] shrink-0 items-start pl-[7px] text-[8px] text-[#161616]">
      <button aria-label="Show info" className="mt-0.5 flex h-[13px] w-[13px] shrink-0 items-center justify-center rounded-full bg-[#555]">
        <svg width="7" height="8" viewBox="0 0 7 8" aria-hidden="true"><path d="M0.500 0.500v7L6.500 4z" fill="#808080" /></svg>
      </button>
      <div className="ml-[7px] flex h-4 min-w-0 flex-1 items-center gap-2 border-2 border-[#5a5a5a] bg-[#8c8c8c] pl-[5px]">
        <span>Time Selection</span><span>Start: 13.1.1</span><span>End: 17.1.1</span><span>Length: 4.0.0</span>
      </div>
      <div className="ml-1 flex h-[14px] w-[159px] shrink-0 bg-[#555] pt-px pl-1">
        <svg width="110" height="13" viewBox="0 0 110 13" className="shrink-0" aria-hidden="true">
          <rect x="1" y="1" width="108" height="14" fill="#a8a8a8" stroke="#111" strokeWidth="2" />
          <rect x="29" y="2" width="10" height="11" fill="#c4ebff" />
          <path d="M6 3h7M15 4.500h14M29 5.500h10M39 6.500h14M53 8h10M63 9.500h12M75 11h8M6 7h7M15 8h14M29 9.500h10M39 11h15M54 12.500h14" stroke="#444" />
          <path d="M86.500 1v12" stroke="#111" />
        </svg>
        <div className="flex-1 bg-[#868686]" />
      </div>
      <div className="ml-[6px] flex h-[14px] w-[128px] shrink-0 items-start gap-0.5 bg-[#555] p-px">
        <span className="w-[55px] whitespace-nowrap pl-0.5 font-bold leading-[14px]">5-Muted Reso</span>
        <svg width="69" height="13" viewBox="0 0 69 13" aria-hidden="true">
          <path d="M0 1h46v12H0zM48 1h21v12H48z" fill="#8e8e8e" />
          <path d="M6 6h32M7 8.500h31M50 4h16M51 6.500h15" stroke="#222" strokeWidth="2" strokeDasharray="4 0.500" />
        </svg>
      </div>
      <button aria-label="Show devices" className="mt-0.5 mr-[7px] ml-2 flex h-[13px] w-[13px] shrink-0 items-center justify-center rounded-full bg-[#555]">
        <svg width="8" height="7" viewBox="0 0 8 7" aria-hidden="true"><path d="M4 0.500L7.500 6.500h-7z" fill="#808080" /></svg>
      </button>
    </footer>
  );
}

export default function App() {
  return (
    <main className="flex h-screen flex-col overflow-hidden bg-[#6e6e6e] font-['Inter','Liberation_Sans',sans-serif] font-medium tabular-nums">
      <Transport />
      <Arrangement />
      <section aria-label="Clip detail" className="mx-[7px] mt-[7px] flex min-h-0 flex-1 bg-[#555] p-px pl-0.5 text-[8px] text-[#161616]">
        <ClipPanel />
        <NotesPanel />
        <Editor />
      </section>
      <StatusBar />
    </main>
  );
}
